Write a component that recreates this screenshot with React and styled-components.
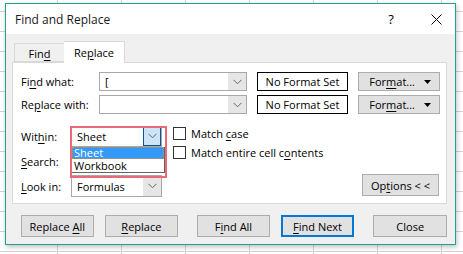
import React from 'react';
import styled, { createGlobalStyle } from 'styled-components';

const GlobalStyle = createGlobalStyle`
  html, body {
    margin: 0;
    padding: 0;
  }
  body {
    width: 463px;
    height: 254px;
    overflow: hidden;
    font-family: 'Segoe UI', 'Open Sans', 'Liberation Sans', sans-serif;
    font-size: 11px;
    color: #000;
    background-color: #fff;
    background-image:
      repeating-linear-gradient(90deg, transparent 0 56px, #d4d4d4 56px 57px, transparent 57px 64px),
      repeating-linear-gradient(180deg, transparent 0 11px, #d4d4d4 11px 12px, transparent 12px 20px);
    background-position: 1px 0, 0 0;
  }
`;

const Page = styled.div`
  padding: 3px 0 0 5px;
`;

const Dialog = styled.div`
  position: relative;
  width: 449px;
  height: 240px;
  border: 1px solid #1fa391;
  background: #f0f0f0;
  box-shadow: 1px 2px 5px rgba(0, 0, 0, 0.25);
  display: flex;
  flex-direction: column;
`;

const TitleBar = styled.div`
  height: 30px;
  background: #fff;
  display: flex;
  align-items: center;
  padding-left: 9px;
`;

const Title = styled.span`
  flex: 1;
  font-size: 12px;
  color: #1a1a1a;
`;

const TitleButton = styled.span`
  width: ${(p) => p.$w}px;
  margin-right: ${(p) => p.$mr}px;
  display: flex;
  justify-content: center;
  align-items: center;
  font-size: 13px;
`;

const Body = styled.div`
  flex: 1;
  padding: 7px 8px 0 6px;
  display: flex;
  flex-direction: column;
`;

const Tabs = styled.div`
  display: flex;
  align-items: flex-end;
  height: 21px;
  padding-left: 2px;
  position: relative;
  z-index: 1;
`;

const Tab = styled.div`
  width: ${(p) => p.$w}px;
  height: ${(p) => (p.$active ? 22 : 19)}px;
  box-sizing: border-box;
  border: 1px solid #d9d9d9;
  border-bottom: ${(p) => (p.$active ? 'none' : '1px solid #d9d9d9')};
  ${(p) => (p.$active ? 'border-left: none;' : 'border-right: none;')}
  background: ${(p) => (p.$active ? '#fff' : '#f0f0f0')};
  display: flex;
  align-items: center;
  justify-content: center;
  padding-top: ${(p) => (p.$active ? 0 : 1)}px;
  margin-bottom: ${(p) => (p.$active ? '-1px' : '0')};
`;

const Panel = styled.div`
  position: relative;
  height: 142px;
  border: 1px solid #d9d9d9;
  background: #fff;
  padding: 9px 0 0 8px;
  box-sizing: border-box;
`;

const TopGrid = styled.div`
  display: grid;
  grid-template-columns: 68px 148px 91px 82px;
  column-gap: 10px;
  row-gap: 4px;
  grid-auto-rows: 19px;
  align-items: center;
`;

const Label = styled.span`
  white-space: nowrap;
`;

const U = styled.span`
  text-decoration: underline;
  text-underline-offset: 2px;
`;

const Combo = styled.div`
  height: ${(p) => p.$h || 19}px;
  box-sizing: border-box;
  border: 1px solid #a8a8a8;
  background: #fff;
  display: flex;
  align-items: stretch;
`;

const ComboText = styled.span`
  flex: 1;
  display: flex;
  align-items: center;
  padding-left: 5px;
  white-space: nowrap;
`;

const ComboArrow = styled.span`
  width: 17px;
  display: flex;
  align-items: center;
  justify-content: center;
  background: ${(p) => (p.$hot ? '#cce4f7' : '#e6e6e6')};
  border-left: 1px solid ${(p) => (p.$hot ? '#005499' : '#e6e6e6')};
  ${(p) => p.$hot && 'outline: 1px solid #005499; outline-offset: -1px;'}
`;

const FormatBox = styled.div`
  height: 19px;
  box-sizing: border-box;
  border: 1px solid #000;
  display: flex;
  align-items: center;
  justify-content: center;
`;

const Button = styled.div`
  height: ${(p) => p.$h || 22}px;
  width: ${(p) => p.$w}px;
  margin-left: ${(p) => p.$ml || 0}px;
  box-sizing: border-box;
  border: ${(p) => (p.$primary ? '2px solid #0078d7' : '1px solid #adadad')};
  background: #e1e1e1;
  display: flex;
  align-items: center;
  justify-content: center;
  white-space: nowrap;
`;

const FormatButton = styled(Button)`
  justify-content: flex-end;
  padding-right: 8px;
  gap: 9px;
`;

const Lower = styled.div`
  margin-top: 11px;
  display: flex;
`;

const LeftGrid = styled.div`
  display: grid;
  grid-template-columns: 50px 91px;
  grid-auto-rows: 22px;
  row-gap: 3px;
  align-items: center;
`;

const Checks = styled.div`
  margin-left: 11px;
  padding-top: 2px;
  display: flex;
  flex-direction: column;
  gap: 6px;
`;

const CheckRow = styled.label`
  display: flex;
  align-items: center;
  gap: 5px;
  height: 13px;
`;

const Box = styled.span`
  width: 13px;
  height: 13px;
  box-sizing: border-box;
  border: 1px solid #333;
  background: #fff;
`;

const OptionsButton = styled(Button)`
  position: absolute;
  right: 7px;
  bottom: 7px;
`;

const List = styled.div`
  position: absolute;
  left: 58px;
  top: 84px;
  width: 94px;
  box-sizing: border-box;
  border: 1px solid #646464;
  border-top: none;
  background: #fff;
`;

const ListItem = styled.div`
  height: ${(p) => (p.$sel ? 12 : 13)}px;
  line-height: ${(p) => (p.$sel ? 12 : 13)}px;
  padding-left: 2px;
  font-size: 11px;
  background: ${(p) => (p.$sel ? '#3399ff' : '#fff')};
  color: ${(p) => (p.$sel ? '#fff' : '#000')};
  ${(p) => p.$sel && 'outline: 1px dotted #e08a2c; outline-offset: -1px;'}
`;

const Marker = styled.div`
  position: absolute;
  left: 57px;
  top: 63px;
  width: 97px;
  height: 52px;
  box-sizing: border-box;
  border: 2px solid #e8697a;
  pointer-events: none;
`;

const Footer = styled.div`
  display: flex;
  align-items: flex-start;
  margin-top: 11px;
  padding-left: 9px;
  gap: 11px;
`;

const Chevron = () => (
  <svg width="9" height="6" viewBox="0 0 9 6">
    <path d="M0.5 0.8 L4.5 4.8 L8.5 0.8" fill="none" stroke="#666" strokeWidth="1" />
  </svg>
);

const Caret = () => (
  <svg width="7" height="4" viewBox="0 0 7 4">
    <path d="M0 0 H7 L3.5 4 Z" fill="#000" />
  </svg>
);

const CloseIcon = () => (
  <svg width="11" height="11" viewBox="0 0 11 11">
    <path d="M0.5 0.5 L10.5 10.5 M10.5 0.5 L0.5 10.5" stroke="#000" strokeWidth="1" />
  </svg>
);

const App = () => {
  return (
    <Page>
      <GlobalStyle />
      <Dialog>
        <TitleBar>
          <Title>Find and Replace</Title>
          <TitleButton $w={14} $mr={31}>?</TitleButton>
          <TitleButton $w={14} $mr={12}>
            <CloseIcon />
          </TitleButton>
        </TitleBar>
        <Body>
          <Tabs>
            <Tab $w={50}>
              <span>
                Fin<U>d</U>
              </span>
            </Tab>
            <Tab $w={61} $active>
              <span>
                Re<U>p</U>lace
              </span>
            </Tab>
          </Tabs>
          <Panel>
            <TopGrid>
              <Label>
                Fi<U>n</U>d what:
              </Label>
              <Combo>
                <ComboText>[</ComboText>
                <ComboArrow>
                  <Chevron />
                </ComboArrow>
              </Combo>
              <FormatBox>No Format Set</FormatBox>
              <FormatButton $h={19} $w={82}>
                <span>
                  For<U>m</U>at...
                </span>
                <Caret />
              </FormatButton>
              <Label>
                Re<U>p</U>lace with:
              </Label>
              <Combo>
                <ComboText />
                <ComboArrow>
                  <Chevron />
                </ComboArrow>
              </Combo>
              <FormatBox>No Format Set</FormatBox>
              <FormatButton $h={19} $w={82}>
                <span>
                  For<U>m</U>at...
                </span>
                <Caret />
              </FormatButton>
            </TopGrid>
            <Lower>
              <LeftGrid>
                <Label>
                  Wit<U>h</U>in:
                </Label>
                <Combo $h={21}>
                  <ComboText>Sheet</ComboText>
                  <ComboArrow $hot>
                    <Chevron />
                  </ComboArrow>
                </Combo>
                <Label>
                  <U>S</U>earch:
                </Label>
                <Combo $h={22}>
                  <ComboText />
                  <ComboArrow>
                    <Chevron />
                  </ComboArrow>
                </Combo>
                <Label>
                  <U>L</U>ook in:
                </Label>
                <Combo $h={22}>
                  <ComboText>Formulas</ComboText>
                  <ComboArrow>
                    <Chevron />
                  </ComboArrow>
                </Combo>
              </LeftGrid>
              <Checks>
                <CheckRow>
                  <Box />
                  <span>
                    Match <U>c</U>ase
                  </span>
                </CheckRow>
                <CheckRow>
                  <Box />
                  <span>
                    Match entire cell c<U>o</U>ntents
                  </span>
                </CheckRow>
              </Checks>
            </Lower>
            <OptionsButton $w={77}>
              <span>
                Op<U>t</U>ions &lt; &lt;
              </span>
            </OptionsButton>
            <List>
              <ListItem $sel>Sheet</ListItem>
              <ListItem>Workbook</ListItem>
            </List>
            <Marker />
          </Panel>
          <Footer>
            <Button $w={73}>
              <span>
                Replace <U>A</U>ll
              </span>
            </Button>
            <Button $w={74}>
              <span>
                <U>R</U>eplace
              </span>
            </Button>
            <Button $w={73} $ml={8}>
              <span>
                F<U>i</U>nd All
              </span>
            </Button>
            <Button $w={74} $primary>
              <span>
                <U>F</U>ind Next
              </span>
            </Button>
            <Button $w={74} $ml={8}>
              Close
            </Button>
          </Footer>
        </Body>
      </Dialog>
    </Page>
  );
};

export default App;
